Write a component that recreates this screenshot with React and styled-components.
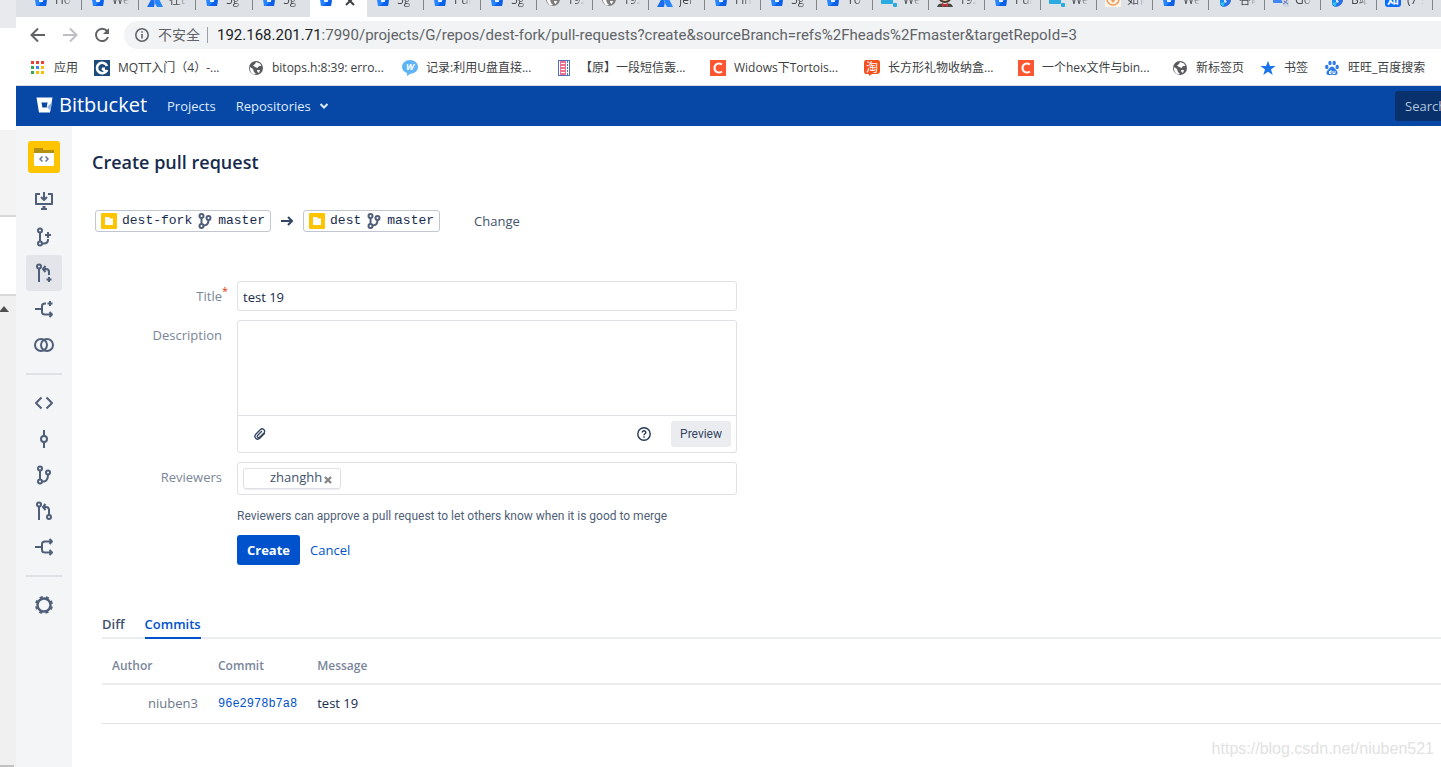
import styled, { createGlobalStyle } from "styled-components";

export default function App() {
  return (
    <>
      <GlobalStyle />
      <Desktop>
        <BackWindow>
          <Block $h={28} $color="#e8eaed" />
          <Block $h={102} $color="#ffffff" />
          <Block $h={87} $color="#f3f3f3" $line="#d9d9d9" />
          <Block $h={79} $color="#ffffff" $line="#d9d9d9" />
          <ScrollBlock>
            <svg width="10" height="6" viewBox="0 0 10 6">
              <path d="M4 0 L9 6 H-1 Z" fill="#505050" />
            </svg>
            <ScrollThumb />
          </ScrollBlock>
        </BackWindow>
        <Browser>
          <TabStrip />
          <Toolbar />
          <Bookmarks />
          <Header />
          <Body>
            <Sidebar />
            <Content />
          </Body>
        </Browser>
        <Watermark>https://blog.csdn.net/niuben521</Watermark>
      </Desktop>
    </>
  );
}

const TABS = [
  ["bucket", "Ho"],
  ["bucket", "We"],
  ["atlas", "在B"],
  ["bucket", "5g"],
  ["bucket", "5g"],
  ["bucket", ""],
  ["bucket", "5g"],
  ["bucket", "Pul"],
  ["bucket", "5g"],
  ["globe", "192"],
  ["globe", "192"],
  ["atlas", "Jer"],
  ["bucket", "Fin"],
  ["bucket", "5g"],
  ["bucket", "Yo"],
  ["chat", "We"],
  ["face", "192"],
  ["bucket", "Pul"],
  ["chat", "We"],
  ["ring", "如何"],
  ["bucket", "We"],
  ["bing", "谷歌"],
  ["translate", "Go"],
  ["bing", "B站"],
  ["zhi", "(7 条"],
];

function TabStrip() {
  return (
    <Strip>
      {TABS.map(([icon, text], i) => (
        <Tab key={i} $active={i === 5} $wide={i < 8} $line={i !== 4 && i !== 5}>
          <TabIcon name={icon} />
          {i === 5 ? (
            <CloseTab aria-label="Close tab">
              <svg width="10" height="10" viewBox="0 0 10 10" fill="none" stroke="#3c4043" strokeWidth="2">
                <path d="M1 0 L9 8 M9 0 L1 8" />
              </svg>
            </CloseTab>
          ) : (
            <TabText>{text}</TabText>
          )}
        </Tab>
      ))}
    </Strip>
  );
}

function TabIcon({ name }) {
  return (
    <svg width="16" height="16" viewBox="0 0 16 16">
      {name === "bucket" && (
        <>
          <path d="M1 2 H15 L13 15 H3 Z" fill="#2684ff" />
          <path d="M9 11 L14 7 L13 15 H5 Z" fill="#0b5fe8" />
          <path d="M5.500 6 H10.500 L9.800 11 H6.200 Z" fill="#eaf2ff" />
        </>
      )}
      {name === "atlas" && (
        <>
          <path d="M5 7 C8 10 8 12 7 16 H0 Z" fill="#1a6cf0" />
          <path d="M8 0 L16 16 H10 C6 9 6 5 8 0 Z" fill="#2684ff" />
        </>
      )}
      {name === "globe" && <Globe color="#7d7d7d" />}
      {name === "chat" && (
        <>
          <rect x="0" y="2" width="12" height="11" rx="1" fill="#29abe2" />
          <rect x="12" y="12" width="4" height="4" rx="1" fill="#29abe2" />
        </>
      )}
      {name === "face" && (
        <>
          <circle cx="8" cy="6" r="5" fill="#e8c9a8" />
          <path d="M3 9 Q8 13 13 9" fill="none" stroke="#4a3a30" strokeWidth="2" />
          <path d="M0 16 C1 12 4 12 8 13 C12 12 15 12 16 16 Z" fill="#4a4a4a" />
          <path d="M5 12 L8 13.500 L11 12 V16 L8 14.500 L5 16 Z" fill="#c33" />
        </>
      )}
      {name === "ring" && (
        <>
          <rect width="16" height="16" fill="#fff3e8" />
          <circle cx="8" cy="8" r="6" fill="none" stroke="#f29a54" strokeWidth="1.500" />
          <path d="M5 8 H11 L8 12 Z" fill="#f29a54" />
        </>
      )}
      {name === "bing" && (
        <>
          <path d="M3 0 L7 2 V12 L3 14 Z" fill="#1b8ff0" />
          <path d="M7 6 L14 9 C14 13 10 16 6 16 L3 14 L10 11 Z" fill="#2a6fe8" />
          <path d="M3 12 L8 11 L6 16 Z" fill="#35c4f0" />
        </>
      )}
      {name === "translate" && (
        <>
          <rect x="0" y="0" width="11" height="12" rx="1" fill="#4285f4" />
          <path d="M7 5 H16 V16 H11 Z" fill="#cfd4de" />
          <path d="M10 8 H15 M12 7 V8 M14 9 C13 12 11 12 10 13 M11 10 L15 13" stroke="#5b79b8" fill="none" />
        </>
      )}
      {name === "zhi" && (
        <>
          <rect width="16" height="16" rx="3" fill="#0a6cff" />
          <text x="8" y="13" textAnchor="middle" fontSize="12" fontWeight="700" fontFamily="Noto Sans CJK SC, sans-serif" fill="#fff">知</text>
        </>
      )}
    </svg>
  );
}

function Globe({ color }) {
  return (
    <>
      <circle cx="8" cy="8" r="7" fill={color} />
      <path d="M2 7 L5 9 L6 12 L8 14 L6 14.500 C3 13.500 1.500 10 2 7 Z" fill="#fff" />
      <path d="M8 2 L12 3.500 L13.500 6 L11 6 L9.500 8 L7 7 L5 5.500 L7 4 Z" fill="#fff" />
      <path d="M9 10 H12 L11 13 L9.500 12 Z" fill="#fff" />
    </>
  );
}

function Toolbar() {
  return (
    <Bar>
      <NavButton aria-label="Back">
        <svg width="16" height="16" viewBox="0 0 16 16" fill="none" stroke="#5f6368" strokeWidth="2">
          <path d="M15 8 H2 M8 1.500 L1.500 8 L8 14.500" />
        </svg>
      </NavButton>
      <NavButton aria-label="Forward">
        <svg width="16" height="16" viewBox="0 0 16 16" fill="none" stroke="#bdc1c6" strokeWidth="2">
          <path d="M1 8 H14 M8 1.500 L14.500 8 L8 14.500" />
        </svg>
      </NavButton>
      <NavButton aria-label="Reload">
        <svg width="16" height="16" viewBox="0 0 16 16" fill="none" stroke="#5f6368" strokeWidth="2">
          <path d="M13 4 A6.200 6.200 0 1 0 14 10" />
          <path d="M15 1 V7 H9 Z" fill="#5f6368" stroke="none" />
        </svg>
      </NavButton>
      <Address>
        <svg width="16" height="16" viewBox="0 0 16 16" fill="none" stroke="#5f6368" strokeWidth="1.600">
          <circle cx="8" cy="8" r="6.200" />
          <path d="M8 7 V11.500 M8 4.200 V5.800" />
        </svg>
        <Security>不安全</Security>
        <Url>
          <b>192.168.201.71</b>
          :7990/projects/G/repos/dest-fork/pull-requests?create&amp;sourceBranch=refs%2Fheads%2Fmaster&amp;targetRepoId=3
        </Url>
      </Address>
    </Bar>
  );
}

const MARKS = [
  ["apps", "应用", 64],
  ["mqtt", "MQTT入门（4）-...", 154],
  ["globe", "bitops.h:8:39: erro...", 154],
  ["word", "记录:利用U盘直接...", 154],
  ["book", "【原】一段短信轰...", 154],
  ["c", "Widows下Tortois...", 154],
  ["tao", "长方形礼物收纳盒...", 154],
  ["c", "一个hex文件与bin...", 154],
  ["globe", "新标签页", 88],
  ["star", "书签", 64],
  ["paw", "旺旺_百度搜索", 110],
];

function Bookmarks() {
  return (
    <MarkBar>
      {MARKS.map(([icon, text, width], i) => (
        <Mark key={i} href="#" $w={width}>
          <MarkIcon name={icon} />
          {text}
        </Mark>
      ))}
    </MarkBar>
  );
}

function MarkIcon({ name }) {
  const dots = ["#ea4335", "#ea4335", "#ea4335", "#34a853", "#4285f4", "#fbbc04", "#34a853", "#fbbc04", "#fbbc04"];
  return (
    <svg width="16" height="16" viewBox="0 0 16 16">
      {name === "apps" &&
        dots.map((c, i) => <rect key={i} x={1 + (i % 3) * 5} y={1 + Math.floor(i / 3) * 5} width="3" height="3" fill={c} />)}
      {name === "mqtt" && (
        <>
          <rect width="16" height="16" fill="#1d4a7a" />
          <path d="M13 10 A5.200 5.200 0 1 1 13 6" fill="none" stroke="#fff" strokeWidth="2.600" />
          <path d="M8 7.500 H11 V10 H14 V11.500 H9.500 L7.500 9.500 Z" fill="#fff" />
        </>
      )}
      {name === "globe" && <Globe color="#5a5b5f" />}
      {name === "word" && (
        <>
          <path d="M8 0 C12.500 0 16 3 16 7 C16 11 12.500 13.500 9 13.500 L5 16 V13 C2 12 0 10 0 7 C0 3 3.500 0 8 0 Z" fill="#5eb4f7" />
          <text x="8" y="10" textAnchor="middle" fontSize="9" fontStyle="italic" fontWeight="700" fontFamily="Open Sans, sans-serif" fill="#fff">W</text>
        </>
      )}
      {name === "book" && (
        <>
          <rect x="2.500" y="0.500" width="11" height="15" fill="#fff" stroke="#4d6fc4" />
          <rect x="4" y="1" width="6" height="14" fill="#ee6f8c" />
          <path d="M5 3.500 H9 M5 6.500 H9 M5 9.500 H9 M5 12.500 H9" stroke="#fff" />
          <path d="M11.500 1 V15" stroke="#4d6fc4" strokeDasharray="2 1" />
        </>
      )}
      {name === "c" && (
        <>
          <rect width="16" height="16" fill="#fc5531" />
          <path d="M12 4.500 C9 2.500 4.500 3.500 4.500 8 C4.500 12.500 9 13.500 12 11.500" fill="none" stroke="#fff" strokeWidth="2" />
        </>
      )}
      {name === "tao" && (
        <>
          <path d="M2 0 H14 Q16 0 16 3 V11 Q16 14 13 14 H8 L5 16 V14 H2 Q0 14 0 11 V3 Q0 0 2 0 Z" fill="#f4511e" />
          <text x="8" y="12" textAnchor="middle" fontSize="12" fontFamily="Noto Sans CJK SC, sans-serif" fill="#fff">淘</text>
        </>
      )}
      {name === "star" && (
        <path d="M8 1 L10 6 H15.500 L11 9.500 L12.700 15 L8 11.700 L3.300 15 L5 9.500 L0.500 6 H6 Z" fill="#1a73e8" />
      )}
      {name === "paw" && (
        <g fill="#2f7de9">
          <ellipse cx="2.800" cy="7" rx="1.700" ry="2.300" />
          <ellipse cx="6" cy="3" rx="1.700" ry="2.300" />
          <ellipse cx="10.200" cy="3" rx="1.700" ry="2.300" />
          <ellipse cx="13.200" cy="7" rx="1.700" ry="2.300" />
          <path d="M8 6.500 C10 6.500 11 9 13 11 C14.500 13 13 15.500 10.500 15 Q8 14.500 5.500 15 C3 15.500 1.500 13 3 11 C5 9 6 6.500 8 6.500 Z" />
          <path d="M7 10 V13.500 H5.500 V11.500 H7 M9 11 V13.500 H11 V11" fill="none" stroke="#fff" />
        </g>
      )}
    </svg>
  );
}

function Header() {
  return (
    <TopBar>
      <Logo href="#">
        <svg width="17" height="16" viewBox="0 0 17 16">
          <path d="M0.500 0.500 H16.500 L14 15.500 H3 Z" fill="#fff" />
          <path d="M5.500 5.500 H11.500 L10.700 10.500 H6.400 Z" fill="#0747a6" />
          <path d="M11 10 L16 5 L14.500 14 Z" fill="#9db6dc" />
        </svg>
        Bitbucket
      </Logo>
      <TopLink href="#">Projects</TopLink>
      <TopLink href="#">
        Repositories
        <svg width="10" height="6" viewBox="0 0 10 6" fill="none" stroke="#deebff" strokeWidth="2">
          <path d="M1.500 1 L5 4.500 L8.500 1" />
        </svg>
      </TopLink>
      <Search type="text" aria-label="Search" placeholder="Search" />
    </TopBar>
  );
}

function SideIcon({ name }) {
  return (
    <svg width="20" height="20" viewBox="0 0 20 20" fill="none" stroke="#505f79" strokeWidth="2" strokeLinejoin="round">
      {name === "clone" && (
        <>
          <path d="M6 3 H2 V13 H18 V3 H14" />
          <path d="M10 1 V8 M7 6 L10 9 L13 6" />
          <path d="M8.500 16 H11.500 M7 18 H13" />
        </>
      )}
      {name === "branchAdd" && (
        <>
          <circle cx="6" cy="3.500" r="2" />
          <circle cx="6" cy="16.500" r="2" />
          <path d="M6 5.500 V14.500 M8 16.500 H10 Q14 16.500 14 12.500 V12 M14 5 V11 M11 8 H17" />
        </>
      )}
      {name === "pullAdd" && (
        <>
          <circle cx="5" cy="3.500" r="2" />
          <path d="M5 5.500 V19 M11.500 3 L9 6 L11.500 9 M9.500 6 H12 Q15 6 15 9 V12 M15 14 V19 M12.500 16.500 H17.500" />
        </>
      )}
      {name === "forkAdd" && (
        <path d="M1 10 H8 M8 10 V7 Q8 4.500 11 4.500 H12 M8 7 V13 Q8 15.500 11 15.500 H17 M16 2 V7 M13.500 4.500 H18.500 M15.500 13 L18 15.500 L15.500 18" />
      )}
      {name === "compare" && (
        <>
          <circle cx="7" cy="10" r="6" />
          <circle cx="13" cy="10" r="6" />
        </>
      )}
      {name === "source" && <path d="M7.500 4.500 L2 10 L7.500 15.500 M12.500 4.500 L18 10 L12.500 15.500" />}
      {name === "commit" && (
        <>
          <circle cx="10" cy="10" r="3" />
          <path d="M10 1 V7 M10 13 V19" />
        </>
      )}
      {name === "branch" && (
        <>
          <circle cx="6" cy="3.500" r="2" />
          <circle cx="6" cy="16.500" r="2" />
          <circle cx="14" cy="7.500" r="2" />
          <path d="M6 5.500 V14.500 M8 16.500 H10 Q14 16 14 9.500" />
        </>
      )}
      {name === "pull" && (
        <>
          <circle cx="5" cy="3.500" r="2" />
          <circle cx="15" cy="16" r="2" />
          <path d="M5 5.500 V19 M11.500 3 L9 6 L11.500 9 M9.500 6 H12 Q15 6 15 9 V14" />
        </>
      )}
      {name === "fork" && (
        <path d="M1 10 H8 M8 7 Q8 4.500 11 4.500 H17 M8 7 V13 Q8 15.500 11 15.500 H17 M15.500 2 L18 4.500 L15.500 7 M15.500 13 L18 15.500 L15.500 18" />
      )}
      {name === "gear" && (
        <>
          <circle cx="10" cy="10" r="6.500" strokeWidth="2.400" />
          <circle cx="10" cy="10" r="8" strokeWidth="2" strokeDasharray="3.200 3.080" strokeDashoffset="4.700" />
        </>
      )}
    </svg>
  );
}

function Sidebar() {
  return (
    <Side>
      <RepoAvatar href="#" aria-label="dest-fork">
        <svg width="20" height="18" viewBox="0 0 20 18">
          <path d="M0 0 H9 V2 H20 V5 H0 Z" fill="#b38f12" />
          <path d="M0 5 H20 V17 Q20 18 19 18 H1 Q0 18 0 17 Z" fill="#fff" />
          <path d="M8.500 8.500 L6 11 L8.500 13.500 M11.500 8.500 L14 11 L11.500 13.500" fill="none" stroke="#6b778c" strokeWidth="1.500" />
        </svg>
      </RepoAvatar>
      {["clone", "branchAdd", "pullAdd", "forkAdd", "compare"].map((n) => (
        <SideLink key={n} href="#" aria-label={n} $active={n === "pullAdd"}>
          <SideIcon name={n} />
        </SideLink>
      ))}
      <Divider />
      {["source", "commit", "branch", "pull", "fork"].map((n) => (
        <SideLink key={n} href="#" aria-label={n}>
          <SideIcon name={n} />
        </SideLink>
      ))}
      <Divider />
      <SideLink href="#" aria-label="settings">
        <SideIcon name="gear" />
      </SideLink>
    </Side>
  );
}

function Ref({ repo, branch }) {
  return (
    <RefBox>
      <svg width="16" height="16" viewBox="0 0 16 16">
        <rect width="16" height="16" rx="1" fill="#ffc400" />
        <path d="M4 4 H8 L9 5.500 H12 V12 H4 Z" fill="#fff" />
      </svg>
      {repo}
      <svg width="16" height="16" viewBox="0 0 16 16" fill="none" stroke="#505f79" strokeWidth="2">
        <circle cx="4.500" cy="3" r="2" />
        <circle cx="4.500" cy="13" r="2" />
        <circle cx="11.500" cy="5" r="2" />
        <path d="M4.500 5 V11 M6.500 12.500 Q11.500 12.500 11.500 7" />
      </svg>
      {branch}
    </RefBox>
  );
}

function Content() {
  return (
    <Main>
      <h1>Create pull request</h1>
      <Refs>
        <Ref repo="dest-fork" branch="master" />
        <svg width="12" height="10" viewBox="0 0 12 10" fill="none" stroke="#344563" strokeWidth="2">
          <path d="M0 5 H10 M7 1 L11 5 L7 9" />
        </svg>
        <Ref repo="dest" branch="master" />
        <ChangeButton>Change</ChangeButton>
      </Refs>
      <Form onSubmit={(e) => e.preventDefault()}>
        <Label htmlFor="title">
          Title<sup>*</sup>
        </Label>
        <TitleInput id="title" type="text" defaultValue="test 19" />
        <Label htmlFor="description">Description</Label>
        <Editor>
          <textarea id="description" />
          <EditorBar>
            <IconButton type="button" aria-label="Attach a file">
              <svg width="14" height="14" viewBox="0 0 14 14" fill="none" stroke="#344563" strokeWidth="1.300" strokeLinecap="round">
                <path d="M11.500 6.500 L7 11 C4 14 0 10 3 7 L7.500 2.500 C9.500 0.500 13 3.500 11 6 L6.500 10.200 C5 11.500 3.500 9.500 4.800 8.300 L8.500 4.500" />
              </svg>
            </IconButton>
            <Spacer />
            <IconButton type="button" aria-label="Help">
              <svg width="14" height="14" viewBox="0 0 14 14" fill="none" stroke="#253858" strokeWidth="1.400">
                <circle cx="7" cy="7" r="6.200" />
                <path d="M5.200 5.600 C5.200 3.200 8.800 3.200 8.800 5.500 C8.800 6.800 7 6.700 7 8.300 M7 9.200 V10.700" />
              </svg>
            </IconButton>
            <PreviewButton type="button">Preview</PreviewButton>
          </EditorBar>
        </Editor>
        <Label htmlFor="reviewers">Reviewers</Label>
        <Picker>
          <Chip>
            zhanghh
            <button type="button" aria-label="Remove zhanghh">
              <svg width="8" height="8" viewBox="0 0 8 8" stroke="#888" strokeWidth="2.400">
                <path d="M1 1 L7 7 M7 1 L1 7" />
              </svg>
            </button>
          </Chip>
          <input id="reviewers" type="text" />
        </Picker>
        <Hint>Reviewers can approve a pull request to let others know when it is good to merge</Hint>
        <Actions>
          <CreateButton type="submit">Create</CreateButton>
          <a href="#">Cancel</a>
        </Actions>
      </Form>
      <Panels>
        <PanelTabs>
          <PanelTab href="#">Diff</PanelTab>
          <PanelTab href="#" $active>
            Commits
          </PanelTab>
        </PanelTabs>
        <Commits>
          <thead>
            <tr>
              <th>Author</th>
              <th>Commit</th>
              <th>Message</th>
            </tr>
          </thead>
          <tbody>
            <tr>
              <Author>niuben3</Author>
              <td>
                <Hash href="#">96e2978b7a8</Hash>
              </td>
              <td>test 19</td>
            </tr>
          </tbody>
        </Commits>
      </Panels>
    </Main>
  );
}

const GlobalStyle = createGlobalStyle`
  * {
    box-sizing: border-box;
  }
  body {
    margin: 0;
    font-family: "Open Sans", "Noto Sans CJK SC", sans-serif;
    font-size: 13px;
    line-height: 20px;
    color: #172b4d;
    background: #fff;
  }
  button, input, textarea {
    font: inherit;
    color: inherit;
    border: none;
    padding: 0;
    margin: 0;
    background: none;
    outline: none;
  }
  a {
    text-decoration: none;
    color: #0052cc;
  }
  svg {
    display: block;
    flex: none;
  }
`;

const Desktop = styled.div`
  display: flex;
  min-height: 100vh;
  position: relative;
  overflow: hidden;
`;

const BackWindow = styled.div`
  width: 16px;
  flex: none;
  display: flex;
  flex-direction: column;
`;

const Block = styled.div`
  height: ${(p) => p.$h}px;
  background: ${(p) => p.$color};
  border-bottom: ${(p) => (p.$line ? `2px solid ${p.$line}` : "none")};
`;

const ScrollBlock = styled.div`
  flex: 1;
  display: flex;
  flex-direction: column;
  justify-content: space-between;
  padding-top: 10px;
  background: #f0f0f0;
`;

const ScrollThumb = styled.div`
  width: 14px;
  height: 2px;
  background: #c1c1c1;
`;

const Browser = styled.div`
  flex: 1;
  min-width: 0;
  display: flex;
  flex-direction: column;
`;

const Strip = styled.div`
  display: flex;
  height: 17px;
  padding-left: 9px;
  background: #dee1e6;
  overflow: hidden;
`;

const Tab = styled.div`
  flex: none;
  width: ${(p) => (p.$wide ? 57 : 56)}px;
  height: 17px;
  display: flex;
  align-items: flex-end;
  gap: 6px;
  padding: 0 0 10px 8px;
  border-radius: ${(p) => (p.$active ? "0" : "0 0 6px 6px")};
  background: ${(p) =>
    p.$active
      ? "#fff"
      : p.$line
      ? "linear-gradient(#808388, #808388) right top / 1px 10px no-repeat"
      : "none"};
`;

const TabText = styled.span`
  width: 17px;
  overflow: hidden;
  white-space: nowrap;
  font-size: 12px;
  line-height: 14px;
  color: #45494d;
  mask-image: linear-gradient(to right, #000 50%, transparent);
`;

const CloseTab = styled.button`
  padding: 0 0 0 5px;
`;

const Bar = styled.div`
  display: flex;
  align-items: center;
  height: 36px;
  gap: 16px;
  padding-left: 14px;
`;

const NavButton = styled.button`
  flex: none;
`;

const Address = styled.div`
  flex: 1;
  min-width: 0;
  display: flex;
  align-items: center;
  height: 28px;
  margin-left: -2px;
  padding-left: 10px;
  border-radius: 14px 0 0 14px;
  background: #f1f3f4;
  overflow: hidden;
`;

const Security = styled.span`
  padding: 0 7px 0 8px;
  border-right: 1px solid #9aa0a6;
  margin-right: 9px;
  font-size: 14px;
  line-height: 16px;
  color: #5f6368;
`;

const Url = styled.div`
  white-space: nowrap;
  font-family: Roboto, sans-serif;
  font-size: 15px;
  color: #5f6368;
  b {
    font-weight: 400;
    color: #202124;
  }
`;

const MarkBar = styled.nav`
  display: flex;
  height: 33px;
  padding: 0 0 2px 14px;
  border-bottom: 1px solid #dadce0;
  overflow: hidden;
`;

const Mark = styled.a`
  flex: none;
  width: ${(p) => p.$w}px;
  display: flex;
  align-items: center;
  gap: 8px;
  white-space: nowrap;
  font-size: 12px;
  color: #3c4043;
`;

const TopBar = styled.header`
  display: flex;
  align-items: center;
  height: 40px;
  gap: 20px;
  padding-left: 20px;
  background: #0747a6;
`;

const Logo = styled.a`
  display: flex;
  align-items: center;
  gap: 6px;
  padding-bottom: 2px;
  font-size: 20px;
  color: #fff;
`;

const TopLink = styled.a`
  display: flex;
  align-items: center;
  gap: 8px;
  color: #deebff;
`;

const Search = styled.input`
  width: 46px;
  height: 30px;
  margin-left: auto;
  padding-left: 10px;
  border-radius: 3px 0 0 3px;
  background: #09326c;
  &::placeholder {
    color: #b3c4de;
    opacity: 1;
  }
`;

const Body = styled.div`
  flex: 1;
  display: flex;
`;

const Side = styled.nav`
  width: 56px;
  flex: none;
  display: flex;
  flex-direction: column;
  align-items: center;
  padding-top: 15px;
  background: #f4f5f7;
`;

const RepoAvatar = styled.a`
  display: flex;
  align-items: center;
  justify-content: center;
  width: 32px;
  height: 32px;
  margin-bottom: 10px;
  border-radius: 3px;
  background: #ffc400;
`;

const SideLink = styled.a`
  display: flex;
  align-items: center;
  justify-content: center;
  width: 36px;
  height: 36px;
  border-radius: 3px;
  background: ${(p) => (p.$active ? "#e3e5ea" : "none")};
`;

const Divider = styled.div`
  width: 36px;
  height: 2px;
  margin: 10px 0;
  background: #dfe1e6;
`;

const Main = styled.main`
  flex: 1;
  min-width: 0;
  padding: 24px 0 0 20px;
  h1 {
    margin: 0;
    font-size: 18px;
    line-height: 24px;
    font-weight: 600;
  }
`;

const Refs = styled.div`
  display: flex;
  align-items: center;
  gap: 10px;
  margin: 36px 0 0 3px;
  height: 22px;
`;

const RefBox = styled.span`
  display: flex;
  align-items: center;
  gap: 5px;
  height: 22px;
  padding: 0 5px;
  border: 1px solid #c1c7d0;
  border-radius: 3px;
  font-family: "Liberation Mono", monospace;
  font-size: 13px;
`;

const ChangeButton = styled.button`
  margin-left: 24px;
  color: #42526e;
`;

const Form = styled.form`
  display: grid;
  grid-template-columns: 130px minmax(0, 500px);
  column-gap: 15px;
  row-gap: 9px;
  margin-top: 49px;
`;

const Label = styled.label`
  position: relative;
  padding-top: 5px;
  text-align: right;
  color: #7a869a;
  sup {
    position: absolute;
    left: 100%;
    top: 0;
    color: #de350b;
  }
`;

const TitleInput = styled.input`
  height: 30px;
  padding: 2px 5px 0;
  border: 1px solid #dfe1e6;
  border-radius: 3px;
`;

const Editor = styled.div`
  border: 1px solid #dfe1e6;
  border-radius: 3px;
  textarea {
    display: block;
    width: 100%;
    height: 94px;
    resize: none;
  }
`;

const EditorBar = styled.div`
  display: flex;
  align-items: center;
  height: 37px;
  padding: 0 5px 0 15px;
  border-top: 1px solid #dfe1e6;
`;

const IconButton = styled.button`
  display: flex;
`;

const Spacer = styled.div`
  flex: 1;
`;

const PreviewButton = styled.button`
  height: 26px;
  margin-left: 20px;
  padding: 0 9px;
  border-radius: 3px;
  background: #ebecf0;
  font-family: Roboto, sans-serif;
  font-size: 12px;
  color: #344563;
`;

const Picker = styled.div`
  display: flex;
  align-items: center;
  height: 33px;
  padding: 0 5px;
  border: 1px solid #dfe1e6;
  border-radius: 3px;
  input {
    flex: 1;
    min-width: 0;
  }
`;

const Chip = styled.span`
  display: flex;
  align-items: center;
  gap: 2px;
  height: 21px;
  padding: 0 8px 3px 26px;
  border: 1px solid #dfe1e6;
  border-radius: 3px;
  box-shadow: 0 1px 1px #ebecf0;
  color: #42526e;
  button {
    padding-top: 5px;
  }
`;

const Hint = styled.p`
  grid-column: 2;
  margin: 2px 0 0;
  font-family: Roboto, sans-serif;
  font-size: 12px;
  color: #505f79;
`;

const Actions = styled.div`
  grid-column: 2;
  display: flex;
  align-items: center;
  gap: 10px;
`;

const CreateButton = styled.button`
  height: 30px;
  padding: 0 10px;
  border-radius: 3px;
  background: #0052cc;
  font-weight: 700;
  color: #fff;
`;

const Panels = styled.section`
  padding-left: 10px;
  margin-top: 44px;
`;

const PanelTabs = styled.nav`
  display: flex;
  gap: 20px;
  height: 30px;
  border-bottom: 2px solid #ebecf0;
`;

const PanelTab = styled.a`
  height: 30px;
  padding-top: 5px;
  font-weight: 600;
  color: ${(p) => (p.$active ? "#0052cc" : "#42526e")};
  border-bottom: 2px solid ${(p) => (p.$active ? "#0052cc" : "transparent")};
`;

const Commits = styled.table`
  width: 100%;
  margin-top: 9px;
  border-collapse: collapse;
  th {
    height: 36px;
    padding: 0 10px;
    text-align: left;
    font-size: 12px;
    font-weight: 600;
    color: #7a869a;
    border-bottom: 2px solid #ebecf0;
  }
  td {
    height: 39px;
    padding: 0 10px 2px;
    border-bottom: 1px solid #dfe1e6;
  }
  th:first-child {
    width: 106px;
  }
  th:nth-child(2) {
    width: 97px;
  }
`;

const Author = styled.td`
  text-align: right;
  color: #6b778c;
`;

const Hash = styled.a`
  font-family: "Liberation Mono", monospace;
  font-size: 12px;
`;

const Watermark = styled.div`
  position: absolute;
  right: 7px;
  bottom: 8px;
  font-family: "Liberation Sans", sans-serif;
  font-size: 16px;
  color: #e2e2e2;
`;
